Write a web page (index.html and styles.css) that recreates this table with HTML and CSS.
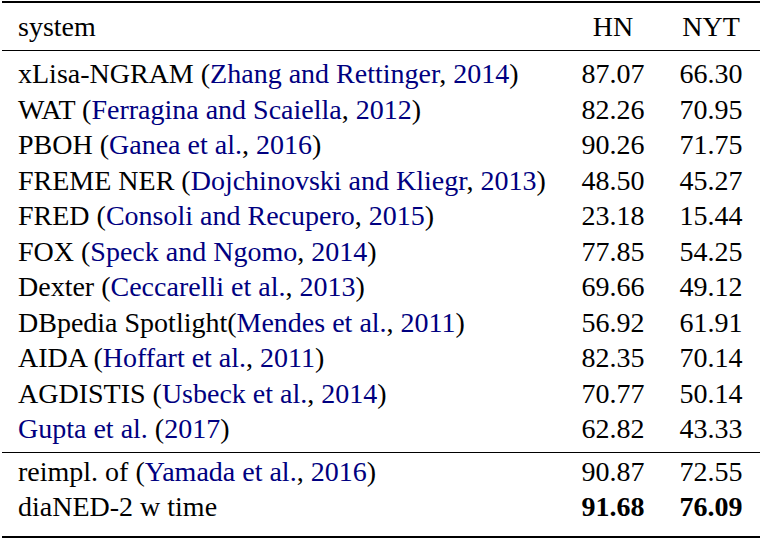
FILE: index.html
```html
<!DOCTYPE html>
<html>
<head>
<meta charset="utf-8">
<link rel="stylesheet" href="styles.css">
</head>
<body>
<table class="results">
  <thead>
    <tr><th class="sys">system</th><th class="num">HN</th><th class="num last">NYT</th></tr>
  </thead>
  <tbody class="main">
    <tr class="first"><td class="sys">xLisa-NGRAM (<span class="cite">Zhang and Rettinger</span>, <span class="cite">2014</span>)</td><td class="num">87.07</td><td class="num last">66.30</td></tr>
    <tr><td class="sys">WAT (<span class="cite">Ferragina and Scaiella</span>, <span class="cite">2012</span>)</td><td class="num">82.26</td><td class="num last">70.95</td></tr>
    <tr><td class="sys">PBOH (<span class="cite">Ganea et al.</span>, <span class="cite">2016</span>)</td><td class="num">90.26</td><td class="num last">71.75</td></tr>
    <tr><td class="sys">FREME NER (<span class="cite">Dojchinovski and Kliegr</span>, <span class="cite">2013</span>)</td><td class="num">48.50</td><td class="num last">45.27</td></tr>
    <tr><td class="sys">FRED (<span class="cite">Consoli and Recupero</span>, <span class="cite">2015</span>)</td><td class="num">23.18</td><td class="num last">15.44</td></tr>
    <tr><td class="sys">FOX (<span class="cite">Speck and Ngomo</span>, <span class="cite">2014</span>)</td><td class="num">77.85</td><td class="num last">54.25</td></tr>
    <tr><td class="sys">Dexter (<span class="cite">Ceccarelli et al.</span>, <span class="cite">2013</span>)</td><td class="num">69.66</td><td class="num last">49.12</td></tr>
    <tr><td class="sys">DBpedia Spotlight(<span class="cite">Mendes et al.</span>, <span class="cite">2011</span>)</td><td class="num">56.92</td><td class="num last">61.91</td></tr>
    <tr><td class="sys">AIDA (<span class="cite">Hoffart et al.</span>, <span class="cite">2011</span>)</td><td class="num">82.35</td><td class="num last">70.14</td></tr>
    <tr><td class="sys">AGDISTIS (<span class="cite">Usbeck et al.</span>, <span class="cite">2014</span>)</td><td class="num">70.77</td><td class="num last">50.14</td></tr>
    <tr class="lastrow"><td class="sys"><span class="cite">Gupta et al.</span> (<span class="cite">2017</span>)</td><td class="num">62.82</td><td class="num last">43.33</td></tr>
  </tbody>
  <tbody class="ours">
    <tr class="first"><td class="sys">reimpl. of (<span class="cite">Yamada et al.</span>, <span class="cite">2016</span>)</td><td class="num">90.87</td><td class="num last">72.55</td></tr>
    <tr class="lastrow"><td class="sys">diaNED-2 w time</td><td class="num"><b class="best">91.68</b></td><td class="num last"><b class="best">76.09</b></td></tr>
  </tbody>
</table>
</body>
</html>
```

FILE: styles.css
```css
html, body {
  margin: 0;
  padding: 0;
  background: #ffffff;
}

body {
  padding-top: 1px;
  font-family: "Liberation Serif", serif;
  font-size: 28px;
  color: #000000;
}

.results {
  margin-left: 2px;
  width: 758px;
  border-collapse: collapse;
  border-top: 2px solid #000;
  border-bottom: 2px solid #000;
  font: 28px "Liberation Serif", serif;
}

.results th,
.results td {
  font: normal 28px/35.5px "Liberation Serif", serif;
  padding: 0 17.5px;
  white-space: nowrap;
}

.results .sys {
  text-align: left;
  padding-left: 16px;
  width: 100%;
}

.results .num {
  text-align: center;
}

.results .last {
  padding-right: 17.5px;
}

.results thead th {
  padding-top: 6px;
  padding-bottom: 5.5px;
  border-bottom: 1.5px solid #000;
}

.results tbody.main .first td {
  padding-top: 5px;
}

.results tbody.main .lastrow td {
  padding-bottom: 5.5px;
}

.results tbody.main {
  border-bottom: 1.5px solid #000;
}

.results tbody.ours .first td {
  padding-top: 0.5px;
}

.results tbody.ours .lastrow td {
  padding-bottom: 11px;
}

.cite {
  color: #000080;
}

.best {
  font-weight: bold;
}
```
